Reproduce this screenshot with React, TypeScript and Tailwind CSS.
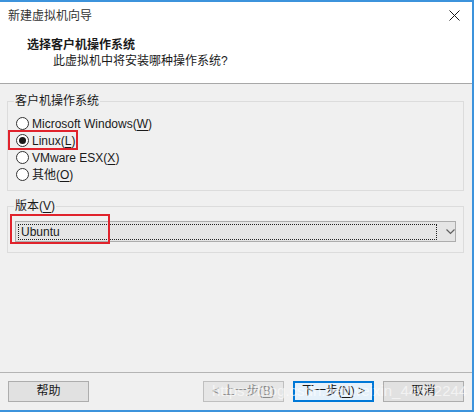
import React from 'react';

const Radio = ({ checked }: { checked?: boolean }) => (
  <span className="w-[13px] h-[13px] shrink-0 rounded-full border border-[#333333] bg-white flex items-center justify-center mr-[3px]">
    {checked && <span className="w-[7px] h-[7px] rounded-full bg-[#1a1a1a]" />}
  </span>
);

const Key = ({ k }: { k: string }) => <span className="underline underline-offset-2">{k}</span>;

const Btn = ({ children, kind }: { children: React.ReactNode; kind?: 'primary' | 'disabled' }) => (
  <button
    className={
      kind === 'primary'
        ? 'w-[81px] h-[21px] border-2 border-[#0078d7] bg-[#e5f1fb] text-[12px] leading-[16px] text-[#1a1a1a]'
        : kind === 'disabled'
        ? 'w-[81px] h-[21px] border border-[#bfbfbf] bg-[#e6e6e6] text-[12px] leading-[16px] text-[#8a8a8a]'
        : 'w-[81px] h-[21px] border border-[#adadad] bg-[#e1e1e1] text-[12px] leading-[16px] text-[#1a1a1a]'
    }
  >
    {children}
  </button>
);

export default function App() {
  const options = [
    { label: 'Microsoft Windows(', key: 'W' },
    { label: 'Linux(', key: 'L', checked: true },
    { label: 'VMware ESX(', key: 'X' },
    { label: '其他(', key: 'O' },
  ];

  return (
    <div className="relative w-[474px] h-[412px] bg-[#f0f0f0] border-t-2 border-r-2 border-b-2 border-[#3c93dc] flex flex-col text-[#1a1a1a] font-['Liberation_Sans','Noto_Sans_CJK_SC',sans-serif]">
      {/* Title + header */}
      <div className="h-[82px] bg-white border-b border-[#a8a8a8] flex flex-col">
        <div className="h-[28px] flex items-center justify-between pl-[8px] pr-[12px]">
          <span className="text-[12px] leading-[16px] text-[#333333]">新建虚拟机向导</span>
          <svg width="11" height="11" viewBox="0 0 11 11" className="mt-[-2px]">
            <path d="M0.5 0.5 L10.5 10.5 M10.5 0.5 L0.5 10.5" stroke="#1a1a1a" strokeWidth="1" />
          </svg>
        </div>
        <div className="mt-[7px] pl-[27px] text-[12px] leading-[16px] font-bold">选择客户机操作系统</div>
        <div className="pl-[53px] text-[12px] leading-[16px]">此虚拟机中将安装哪种操作系统?</div>
      </div>

      {/* Content */}
      <div className="flex-1 flex flex-col">
        <fieldset className="mt-[9px] ml-[7px] w-[457px] border border-[#dcdcdc] pt-[6px] pb-[7px]">
          <legend className="ml-[6px] px-[1px] text-[12px] leading-[16px]">客户机操作系统</legend>
          {options.map((o) => (
            <div key={o.key} className="relative h-[17px] flex items-center pl-[8px] text-[12px] leading-[16px]">
              <Radio checked={o.checked} />
              <span>
                {o.label}
                <Key k={o.key} />)
              </span>
              {o.checked && (
                <span className="absolute left-[0px] top-[-2px] w-[70px] h-[20px] border-2 border-[#e0232c]" />
              )}
            </div>
          ))}
        </fieldset>

        <fieldset className="mt-[7px] ml-[7px] w-[457px] border border-[#dcdcdc] px-[7px] pt-[7px] pb-[10px]">
          <legend className="ml-[-1px] px-[1px] text-[12px] leading-[16px]">
            版本(<Key k="V" />)
          </legend>
          <div className="relative h-[21px] border border-[#adadad] bg-[#e5e5e5] flex items-center">
            <div className="ml-[2px] w-[419px] h-[16px] border border-dotted border-[#222222] flex items-center pl-[2px] text-[12px] leading-[16px]">
              Ubuntu
            </div>
            <svg width="9" height="6" viewBox="0 0 9 6" className="ml-[9px]">
              <path d="M0.5 0.5 L4.5 4.5 L8.5 0.5" fill="none" stroke="#606060" strokeWidth="1.2" />
            </svg>
            <span className="absolute left-[-6px] top-[-8px] w-[100px] h-[30px] border-2 border-[#e0232c]" />
          </div>
        </fieldset>
      </div>

      {/* Footer */}
      <div className="h-[38px] border-t border-[#b4b4b4] flex items-center px-[8px] pb-[1px]">
        <Btn>帮助</Btn>
        <div className="ml-auto flex gap-[9px]">
          <Btn kind="disabled">
            &lt; 上一步(<Key k="B" />)
          </Btn>
          <Btn kind="primary">
            下一步(<Key k="N" />) &gt;
          </Btn>
          <Btn>取消</Btn>
        </div>
      </div>

      {/* watermark */}
      <span className="absolute left-[212px] top-[380px] text-[15px] leading-[18px] text-white/60 pointer-events-none whitespace-nowrap">
        https://blog.csdn.net/weixin_44822244
      </span>
    </div>
  );
}
